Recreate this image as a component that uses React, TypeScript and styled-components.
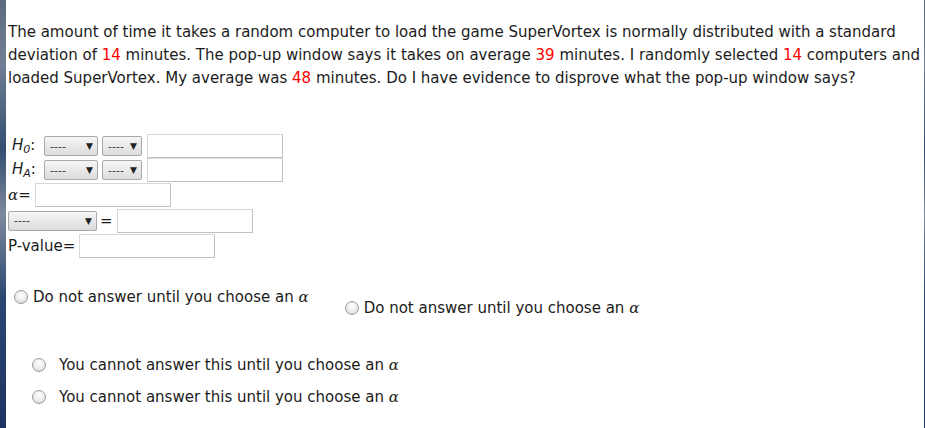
import { createGlobalStyle, styled } from "styled-components";

const GlobalStyle = createGlobalStyle`
    html, body {
        margin: 0;
        padding: 0;
    }
    body {
        width: 925px;
        height: 428px;
        overflow: hidden;
        background: linear-gradient(180deg, #5b6b80 0%, #6f7f94 15%, #344d70 35%, #7d8a9c 50%, #2a4670 70%, #1c3560 100%);
        font-family: "DejaVu Sans", Verdana, sans-serif;
    }
`;

const Panel = styled.div`
    margin-left: 6px;
    width: 916px;
    height: 428px;
    background: #fff;
    padding: 21px 0 0 2px;
    color: #1c1c1c;
    font-size: 15px;
`;

const Question = styled.p`
    margin: 0;
    line-height: 23px;
    width: 915px;
`;

const Num = styled.span`
    color: #ff0000;
`;

const Form = styled.div`
    margin-top: 44px;
    display: flex;
    flex-direction: column;
`;

const Row = styled.div<{ $h?: number }>`
    display: flex;
    align-items: center;
    height: ${(p) => p.$h ?? 24}px;
    gap: 4px;
`;

const HLabel = styled.span`
    font-style: italic;
    font-size: 15px;
    width: 28px;
    padding-left: 4px;
    b {
        font-weight: normal;
        font-style: normal;
    }
`;

const Sub = styled.sub`
    font-size: 11px;
    font-style: italic;
    vertical-align: -3px;
`;

const Select = styled.div<{ $w: number }>`
    width: ${(p) => p.$w}px;
    height: 20px;
    box-sizing: border-box;
    border: 1px solid #a8a8a8;
    border-radius: 2px;
    background: linear-gradient(180deg, #f6f6f6, #dcdcdc);
    display: flex;
    align-items: center;
    justify-content: space-between;
    padding: 0 4px 0 5px;
    font-size: 11px;
    color: #333;
    &::after {
        content: "▼";
        font-size: 9px;
        color: #222;
    }
`;

const TextBox = styled.div<{ $w?: number; $ml?: number }>`
    width: ${(p) => p.$w ?? 136}px;
    height: 24px;
    margin-left: ${(p) => p.$ml ?? 0}px;
    box-sizing: border-box;
    border: 1px solid #c0c0c0;
    border-top-color: #d8d8d8;
    border-left-color: #d8d8d8;
    background: #fff;
`;

const Alpha = styled.span`
    font-family: "DejaVu Serif", serif;
    font-style: italic;
`;

const Eq = styled.span`
    margin-left: -1px;
`;

const Choices = styled.div`
    display: flex;
    align-items: flex-start;
    margin-top: 29px;
    padding-left: 6px;
`;

const Choice = styled.label<{ $drop?: number; $ml?: number; $textGap?: number }>`
    display: flex;
    align-items: center;
    margin-top: ${(p) => p.$drop ?? 0}px;
    margin-left: ${(p) => p.$ml ?? 0}px;
    gap: ${(p) => p.$textGap ?? 5}px;
    line-height: 20px;
`;

const Radio = styled.span`
    width: 12px;
    height: 12px;
    border-radius: 50%;
    border: 1px solid #9a9a9a;
    background: radial-gradient(circle at 50% 35%, #ffffff 0%, #eeeeee 50%, #cfcfcf 100%);
    flex-shrink: 0;
`;

const ChoiceList = styled.div`
    display: flex;
    flex-direction: column;
    gap: 12px;
    margin-top: 37px;
    padding-left: 24px;
`;

export default function App() {
    return (
        <>
            <GlobalStyle />
            <Panel>
                <Question>
                    The amount of time it takes a random computer to load the game SuperVortex is normally distributed
                    with a standard deviation of <Num>14</Num> minutes. The pop-up window says it takes on average{" "}
                    <Num>39</Num> minutes. I randomly selected <Num>14</Num> computers and loaded SuperVortex. My
                    average was <Num>48</Num> minutes. Do I have evidence to disprove what the pop-up window says?
                </Question>
                <Form>
                    <Row>
                        <HLabel>
                            H<Sub>0</Sub>
                            <b>:</b>
                        </HLabel>
                        <Select $w={54}>----</Select>
                        <Select $w={40}>----</Select>
                        <TextBox $ml={1} />
                    </Row>
                    <Row>
                        <HLabel>
                            H<Sub>A</Sub>
                            <b>:</b>
                        </HLabel>
                        <Select $w={54}>----</Select>
                        <Select $w={40}>----</Select>
                        <TextBox $ml={1} />
                    </Row>
                    <Row $h={26}>
                        <span>
                            <Alpha>α</Alpha>=
                        </span>
                        <TextBox />
                    </Row>
                    <Row $h={25}>
                        <Select $w={89}>----</Select>
                        <Eq>=</Eq>
                        <TextBox />
                    </Row>
                    <Row $h={25}>
                        <span>P-value=</span>
                        <TextBox />
                    </Row>
                </Form>
                <Choices>
                    <Choice>
                        <Radio />
                        <span>
                            Do not answer until you choose an <Alpha>α</Alpha>
                        </span>
                    </Choice>
                    <Choice $drop={11} $ml={36}>
                        <Radio />
                        <span>
                            Do not answer until you choose an <Alpha>α</Alpha>
                        </span>
                    </Choice>
                </Choices>
                <ChoiceList>
                    <Choice $textGap={13}>
                        <Radio />
                        <span>
                            You cannot answer this until you choose an <Alpha>α</Alpha>
                        </span>
                    </Choice>
                    <Choice $textGap={13}>
                        <Radio />
                        <span>
                            You cannot answer this until you choose an <Alpha>α</Alpha>
                        </span>
                    </Choice>
                </ChoiceList>
            </Panel>
        </>
    );
}
